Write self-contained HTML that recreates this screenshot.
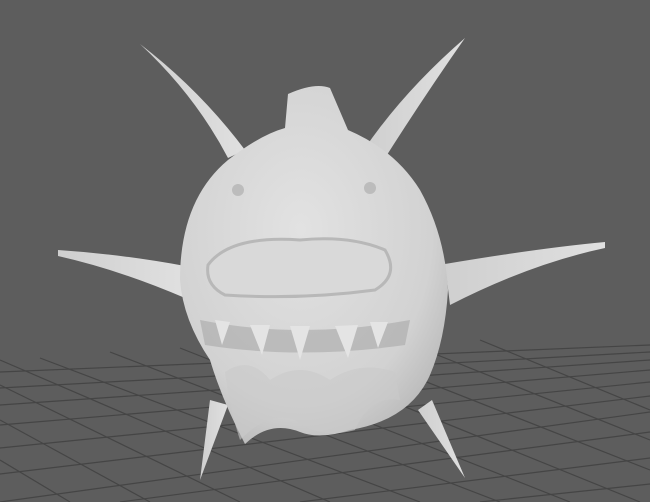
<html><head><style>body{margin:0;background:#5d5d5d;overflow:hidden}</style></head><body>
<svg width="650" height="502" viewBox="0 0 650 502" xmlns="http://www.w3.org/2000/svg">
<defs>
<radialGradient id="g" cx="0.45" cy="0.4" r="0.7"><stop offset="0" stop-color="#e2e2e2"/><stop offset="0.7" stop-color="#d2d2d2"/><stop offset="1" stop-color="#b4b4b4"/></radialGradient>
<linearGradient id="h" x1="0" x2="1"><stop offset="0" stop-color="#cfcfcf"/><stop offset="1" stop-color="#e0e0e0"/></linearGradient>
</defs>
<rect width="650" height="502" fill="#5d5d5d"/>
<g stroke="#454545" stroke-width="1.2" fill="none">
<path d="M0 372 L650 345"/><path d="M0 388 L650 352"/><path d="M0 405 L650 360"/><path d="M0 425 L650 370"/><path d="M0 448 L650 382"/><path d="M0 474 L650 396"/><path d="M0 502 L650 412"/><path d="M120 502 L650 432"/><path d="M300 502 L650 458"/><path d="M480 502 L650 484"/>
<path d="M0 385 L240 502"/><path d="M0 360 L330 502"/><path d="M40 358 L420 502"/><path d="M110 352 L500 502"/><path d="M180 348 L570 502"/><path d="M250 344 L640 502"/><path d="M320 340 L650 470"/><path d="M400 340 L650 440"/><path d="M480 340 L650 410"/><path d="M0 420 L150 502"/><path d="M0 460 L70 502"/>
</g>
<g fill="url(#h)">
<path d="M58 250 Q120 254 185 266 L185 298 Q120 270 58 256Z"/>
<path d="M605 242 Q540 248 445 264 L450 305 Q530 264 605 248Z"/>
<path d="M140 44 Q200 90 245 150 L228 158 Q195 95 140 44Z"/>
<path d="M465 38 Q405 90 365 148 L385 158 Q425 95 465 38Z"/>
<path d="M200 480 L210 400 L228 405Z"/>
<path d="M465 478 L432 400 L418 410Z"/>
</g>
<path d="M288 94 Q315 82 330 88 L348 130 Q395 150 420 190 Q445 235 448 290 Q445 340 430 375 Q410 420 350 430 Q320 440 300 432 Q270 420 245 444 Q222 400 210 360 Q183 320 180 280 Q180 200 228 160 Q260 135 285 128Z" fill="url(#g)"/>
<path d="M208 265 Q230 235 300 240 Q350 235 385 250 Q400 275 375 290 Q300 300 225 295 Q205 285 208 265Z" fill="#d9d9d9" stroke="#b8b8b8" stroke-width="3"/>
<path d="M200 320 Q300 340 410 320 L405 345 Q300 360 205 345Z" fill="#a8a8a8" opacity="0.6"/>
<g fill="#e4e4e4"><path d="M215 320 L222 345 L230 322Z"/><path d="M250 325 L262 355 L270 325Z"/><path d="M290 326 L300 360 L310 326Z"/><path d="M335 326 L348 358 L358 325Z"/><path d="M370 322 L378 348 L388 322Z"/></g>
<path d="M225 372 Q250 355 270 380 Q300 360 330 380 Q360 360 395 372 L400 400 Q370 395 355 430 Q320 440 295 420 Q270 410 240 440 Q230 410 225 372Z" fill="#c9c9c9" opacity="0.6"/>
<circle cx="238" cy="190" r="6" fill="#bcbcbc"/><circle cx="370" cy="188" r="6" fill="#bcbcbc"/>
</svg>
</body></html>
